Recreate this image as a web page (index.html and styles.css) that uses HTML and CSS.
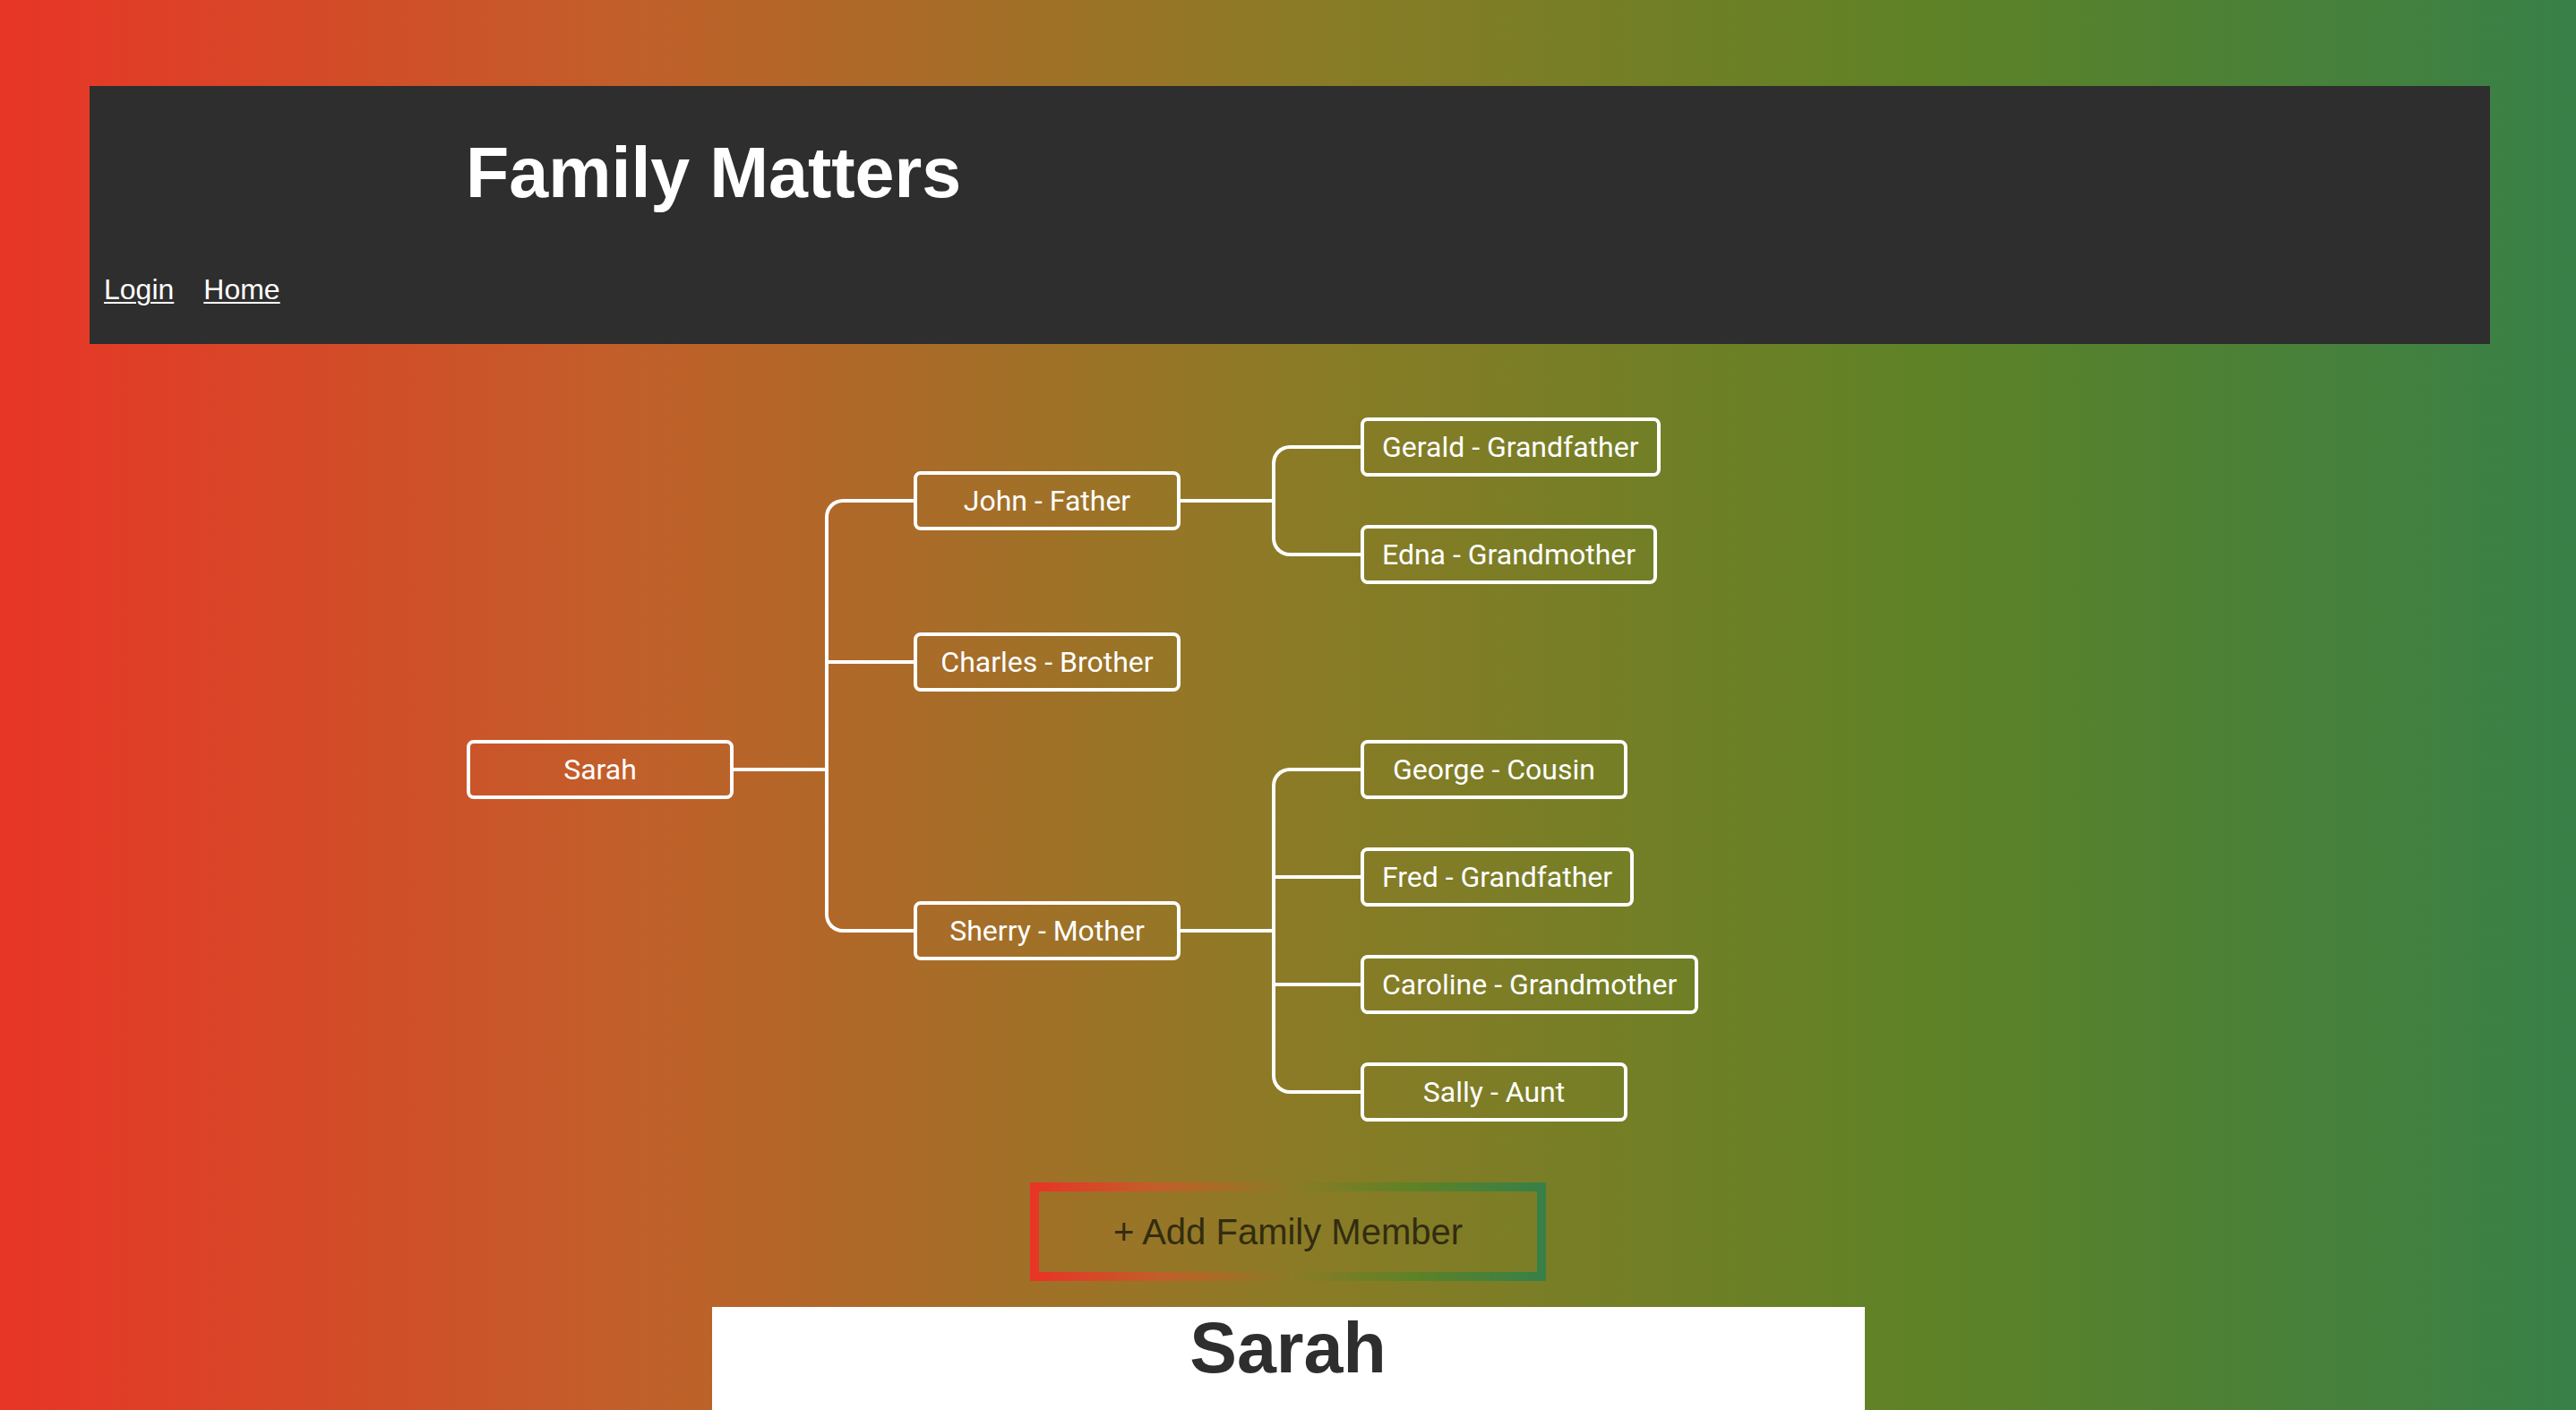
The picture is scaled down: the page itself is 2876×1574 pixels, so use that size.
FILE: index.html
```html
<!DOCTYPE html>
<html lang="en">
<head>
<meta charset="utf-8">
<title>Family Matters</title>
<link rel="stylesheet" href="styles.css">
</head>
<body>
<div class="page">
  <header class="site-header">
    <h1 class="site-title">Family Matters</h1>
    <nav class="site-nav">
      <a href="#">Login</a>
      <a href="#">Home</a>
    </nav>
  </header>

  <main class="content">
    <div class="tree">
      <div class="node">
        <div class="label">Sarah</div>
        <div class="children">
          <div class="child">
            <div class="node">
              <div class="label">John - Father</div>
              <div class="children">
                <div class="child leaf"><div class="label">Gerald - Grandfather</div></div>
                <div class="child leaf"><div class="label">Edna - Grandmother</div></div>
              </div>
            </div>
          </div>
          <div class="child leaf"><div class="label">Charles - Brother</div></div>
          <div class="child">
            <div class="node">
              <div class="label">Sherry - Mother</div>
              <div class="children">
                <div class="child leaf"><div class="label">George - Cousin</div></div>
                <div class="child leaf"><div class="label">Fred - Grandfather</div></div>
                <div class="child leaf"><div class="label">Caroline - Grandmother</div></div>
                <div class="child leaf"><div class="label">Sally - Aunt</div></div>
              </div>
            </div>
          </div>
        </div>
      </div>
    </div>

    <button class="add-btn" type="button">+ Add Family Member</button>

    <section class="detail-panel">
      <h2 class="detail-name">Sarah</h2>
    </section>
  </main>
</div>
</body>
</html>
```

FILE: styles.css
```css
html, body {
  margin: 0;
  padding: 0;
}

body {
  font-family: "Liberation Sans", Arial, sans-serif;
  background: linear-gradient(to right, #e83526 0%, #c0602a 25%, #8c7b26 50%, #5e8226 75%, #388048 100%);
  background-attachment: fixed;
  min-height: 100vh;
}

.page {
  padding-top: 96px;
}

.site-header {
  margin: 0 96px 0 100px;
  background: #2e2e2e;
  padding: 52px 14px 42px 16px;
}

.site-title {
  margin: 0 0 0 404px;
  font-size: 79px;
  line-height: 90px;
  font-weight: 700;
  color: #ffffff;
}

.site-nav {
  margin-top: 67px;
  display: flex;
  gap: 33px;
  font-size: 32px;
  line-height: 37px;
}

.site-nav a {
  color: #ffffff;
  text-decoration: underline;
  text-decoration-thickness: 2px;
  text-underline-offset: 3px;
}

.content {
  display: flex;
  flex-direction: column;
  align-items: center;
}

/* ---------- Tree ---------- */
.tree {
  width: 1834px;
  margin-top: 55px;
  display: flex;
}

.node {
  display: flex;
  align-items: center;
}

.label {
  box-sizing: border-box;
  min-width: 298px;
  height: 66px;
  padding: 0 20px;
  border: 4px solid #ffffff;
  border-radius: 8px;
  display: flex;
  align-items: center;
  justify-content: center;
  font-family: Roboto, "Noto Sans", sans-serif;
  font-size: 32px;
  color: #ffffff;
  white-space: nowrap;
}

.children {
  position: relative;
  margin-left: 102px;
  display: flex;
  flex-direction: column;
}

.children::before {
  content: "";
  position: absolute;
  left: -102px;
  width: 102px;
  top: 50%;
  margin-top: -2px;
  border-top: 4px solid #ffffff;
}

.child {
  position: relative;
  padding-left: 99px;
  display: flex;
  align-items: center;
}

.child.leaf {
  padding-top: 27px;
  padding-bottom: 27px;
}

.child::before {
  content: "";
  position: absolute;
  left: 0;
  width: 99px;
  top: 50%;
  margin-top: -2px;
  border-top: 4px solid #ffffff;
}

.child::after {
  content: "";
  position: absolute;
  left: 0;
  top: 0;
  bottom: 0;
  border-left: 4px solid #ffffff;
}

.child:first-child::before {
  box-sizing: border-box;
  bottom: 0;
  border-left: 4px solid #ffffff;
  border-top-left-radius: 20px;
}

.child:first-child::after {
  display: none;
}

.child:last-child::before {
  box-sizing: border-box;
  top: 0;
  margin-top: 0;
  height: calc(50% + 2px);
  border-top: none;
  border-bottom: 4px solid #ffffff;
  border-left: 4px solid #ffffff;
  border-bottom-left-radius: 20px;
}

.child:last-child::after {
  display: none;
}

/* ---------- Add button ---------- */
.add-btn {
  box-sizing: border-box;
  width: 576px;
  height: 110px;
  margin-top: 41px;
  background: transparent;
  border: 10px solid;
  border-image: linear-gradient(to right, #e83526 0%, #c0602a 25%, #8c7b26 50%, #5e8226 75%, #388048 100%) 1;
  font-family: "Liberation Sans", Arial, sans-serif;
  font-size: 40px;
  color: #332c10;
  padding: 0;
  cursor: pointer;
}

/* ---------- Detail panel ---------- */
.detail-panel {
  width: 1287px;
  margin-top: 29px;
  min-height: 260px;
  background: #ffffff;
}

.detail-name {
  margin: 0;
  text-align: center;
  font-size: 79px;
  font-weight: 700;
  color: #2e2e2e;
}
```
